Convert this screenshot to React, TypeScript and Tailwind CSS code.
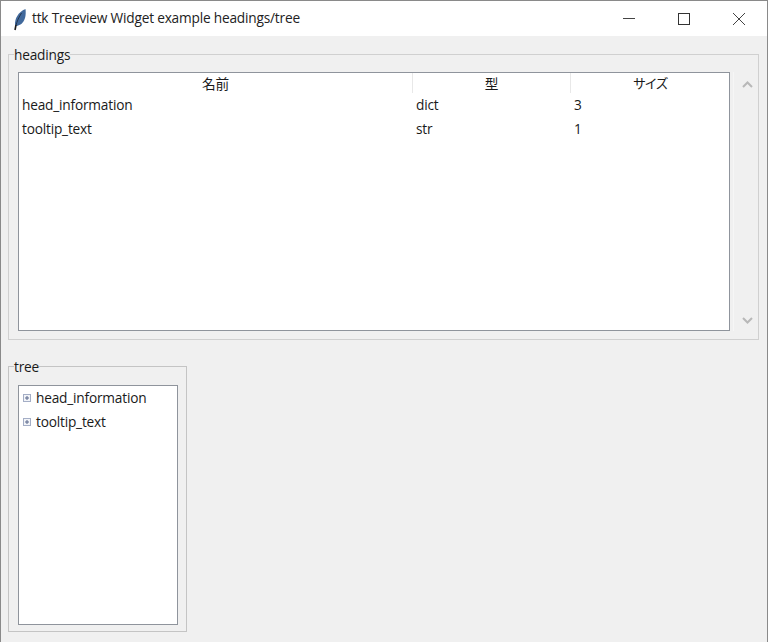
const font = { fontFamily: '"Open Sans", "Noto Sans CJK JP", sans-serif' }

function Feather() {
  return (
    <svg width="16" height="24" viewBox="0 0 16 24" className="shrink-0">
      <path d="M3 18C2.500 12 6 5 13.500 2c.8 6-.5 13-5 15.500L5 19z" fill="#41699c" />
      <path d="M9.500 6C7 10 5 14 3.800 19" stroke="#24364f" strokeWidth="1" fill="none" />
      <path d="M3 23l1-5" stroke="#1c1c1c" strokeWidth="1.600" />
    </svg>
  )
}

function WindowButtons() {
  return (
    <div className="flex h-full pr-[5px]">
      <div className="w-[46px] flex items-center justify-center mr-[1px]">
        <div className="w-[12px] h-px bg-[#444]" />
      </div>
      <div className="w-[46px] flex items-center justify-center ml-[8px]">
        <div className="w-[12px] h-[12px] border border-[#333]" />
      </div>
      <div className="w-[46px] flex items-center justify-center ml-[9px]">
        <svg width="14" height="14" viewBox="0 0 14 14">
          <path d="M1 1l12 12M13 1L1 13" stroke="#444" strokeWidth="1" fill="none" />
        </svg>
      </div>
    </div>
  )
}

function Expander() {
  return (
    <svg width="8" height="8" viewBox="0 0 8 8" className="shrink-0">
      <rect x="0.500" y="0.500" width="7" height="7" fill="#f2f4f8" stroke="#a4aec6" />
      <path d="M2 4h4M4 2v4" stroke="#5a688c" />
    </svg>
  )
}

function Chevron({ up }: { up?: boolean }) {
  return (
    <svg width="11" height="7" viewBox="0 0 11 7">
      <path d={up ? 'M1 6l4.500-4.500L10 6' : 'M1 1l4.500 4.500L10 1'} stroke="#b8b8b8" strokeWidth="2" fill="none" />
    </svg>
  )
}

const rows = [
  ['head_information', 'dict', '3'],
  ['tooltip_text', 'str', '1'],
]

export default function App() {
  return (
    <div className="w-[768px] h-[642px] bg-[#f0f0f0] border border-[#8a8a8a] border-b-0 overflow-hidden text-[13.700px] tracking-[-0.200px] text-[#1a1a1a]" style={font}>
      <div className="h-[35px] bg-white flex items-center justify-between">
        <div className="flex items-center pl-[11px] gap-[4px] text-[#222]">
          <Feather />
          <span>ttk Treeview Widget example headings/tree</span>
        </div>
        <WindowButtons />
      </div>

      <div className="pl-[7px] pt-[9px]">
        <fieldset className="w-[751px] h-[295px] border border-[#d0d0d0] pl-[9px] pr-[5px]">
          <legend className="-ml-[4px] leading-[18px] pt-[1px]">headings</legend>
          <div className="flex h-[259px] mt-[8px]">
            <div className="w-[712px] border border-[#8f949c] bg-white">
              <div className="flex h-[20px] items-center">
                <div className="w-[394px] text-center border-r border-[#e8e8e8] h-full leading-[21px]">名前</div>
                <div className="w-[158px] text-center border-r border-[#e8e8e8] h-full leading-[21px]">型</div>
                <div className="flex-1 text-center h-full leading-[21px] text-[13px] tracking-[-1.500px]">サイズ</div>
              </div>
              {rows.map(row => (
                <div key={row[0]} className="flex h-[24px] items-center">
                  <div className="w-[394px] pl-[3px]">{row[0]}</div>
                  <div className="w-[158px] pl-[3px]">{row[1]}</div>
                  <div className="flex-1 pl-[3px]">{row[2]}</div>
                </div>
              ))}
            </div>
            <div className="ml-[3px] w-[20px] border-l border-[#f6f6f6] flex flex-col items-center justify-between pt-[9px] pb-[7px] pl-[8px]">
              <Chevron up />
              <Chevron />
            </div>
          </div>
        </fieldset>

        <fieldset className="mt-[17px] w-[179px] h-[275px] border border-[#c4c4c4] pl-[9px] pr-[8px]">
          <legend className="-ml-[4px] leading-[18px] pt-[1px]">tree</legend>
          <div className="w-[160px] h-[240px] mt-[9px] border border-[#8f949c] bg-white">
            {rows.map(row => (
              <div key={row[0]} className="flex h-[24px] items-center pl-[4px] gap-[5px]">
                <Expander />
                <span>{row[0]}</span>
              </div>
            ))}
          </div>
        </fieldset>
      </div>
    </div>
  )
}
